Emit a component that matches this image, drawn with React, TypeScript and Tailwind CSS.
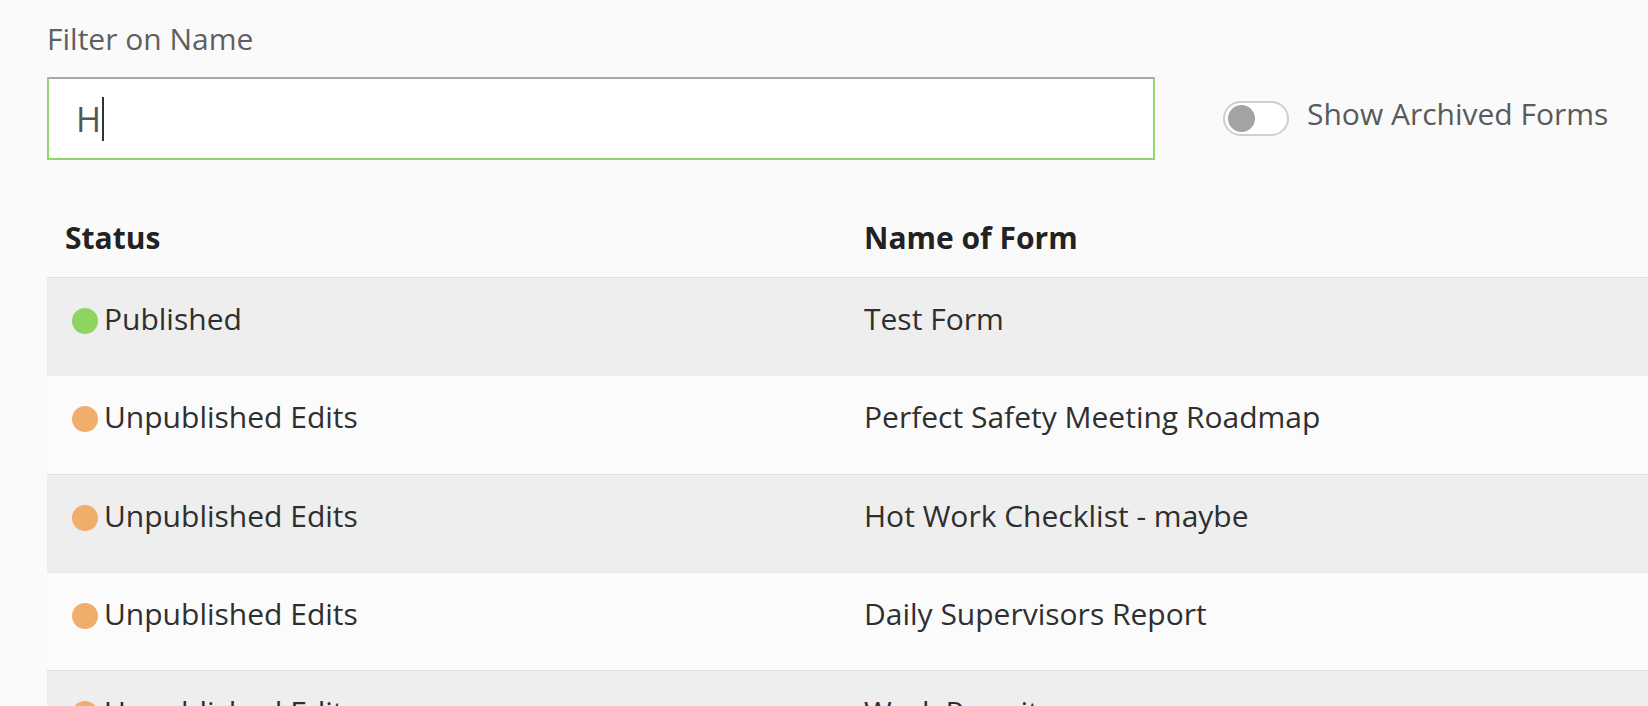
import React from "react";

type Row = { status: "Published" | "Unpublished Edits"; name: string };

const rows: Row[] = [
  { status: "Published", name: "Test Form" },
  { status: "Unpublished Edits", name: "Perfect Safety Meeting Roadmap" },
  { status: "Unpublished Edits", name: "Hot Work Checklist - maybe" },
  { status: "Unpublished Edits", name: "Daily Supervisors Report" },
  { status: "Unpublished Edits", name: "Work Permit" },
];

export default function App() {
  return (
    <div className="h-[706px] w-full overflow-hidden bg-[#fafafa] pl-[47px] pt-[19px] font-['Open_Sans',sans-serif]">
      <div className="text-[30px] leading-[40px] text-[#5f5f5f]">Filter on Name</div>
      <div className="mt-[18px] flex items-center">
        <div className="flex h-[83px] w-[1108px] items-center border-2 border-[#96d46c] border-t-[#a9a9a9] bg-white pl-[27px]">
          <span className="text-[34px] leading-[44px] text-[#555555]">H</span>
          <span className="ml-[1px] h-[44px] w-[2px] bg-[#333333]" />
        </div>
        <div className="ml-[68px] flex items-center">
          <div className="flex h-[35px] w-[66px] items-center rounded-full border-2 border-[#cfcfcf] bg-white pl-[3px]">
            <div className="h-[27px] w-[27px] rounded-full bg-[#a3a3a3]" />
          </div>
          <span className="ml-[18px] -translate-y-[5px] text-[30px] leading-[40px] text-[#5a5a5a]">
            Show Archived Forms
          </span>
        </div>
      </div>
      <div className="mt-[40px]">
        <div className="flex pt-[20px] pb-[21px] text-[30px] font-bold leading-[36px] text-[#222222]">
          <div className="w-[817px] pl-[18px]">Status</div>
          <div>Name of Form</div>
        </div>
        {rows.map((r, i) => (
          <div
            key={i}
            className={
              i % 2 === 0
                ? "flex h-[98.3px] items-start border-t border-[#e0e0e0] bg-[#eeeeee] pt-[21px] text-[30px] leading-[40px] text-[#2f2f2f]"
                : "flex h-[98.3px] items-start border-t border-[#eaeaea] bg-[#fbfbfb] pt-[21px] text-[30px] leading-[40px] text-[#2f2f2f]"
            }
          >
            <div className="flex h-[40px] w-[817px] items-center pl-[25px]">
              <span
                className={
                  r.status === "Published"
                    ? "h-[26px] w-[26px] translate-y-[2px] rounded-full bg-[#8fd462]"
                    : "h-[26px] w-[26px] translate-y-[2px] rounded-full bg-[#f0ad6c]"
                }
              />
              <span className="ml-[6px]">{r.status}</span>
            </div>
            <div>{r.name}</div>
          </div>
        ))}
      </div>
    </div>
  );
}
